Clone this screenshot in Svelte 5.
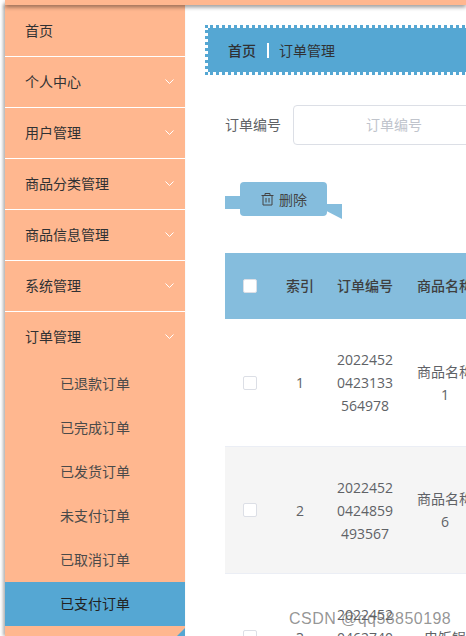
<script>
  const menus = ['个人中心', '用户管理', '商品分类管理', '商品信息管理', '系统管理'];
  const subs = ['已退款订单', '已完成订单', '已发货订单', '未支付订单', '已取消订单', '已支付订单'];
  const rows = [
    { idx: 1, no: '20224520423133564978', name: '商品名称1' },
    { idx: 2, no: '20224520424859493567', name: '商品名称6' },
    { idx: 3, no: '20224520462740182936', name: '电饭锅' }
  ];
</script>

<div class="page">
  <div class="topbar"></div>
  <div class="body">
    <aside class="sidebar">
      <div class="item">首页</div>
      {#each menus as m}
        <div class="item">
          {m}
          <svg class="arrow" width="9" height="5" viewBox="0 0 9 5" fill="none" stroke="currentColor" stroke-width="1"><polyline points="0.5 0.5 4.5 4.5 8.5 0.5"></polyline></svg>
        </div>
      {/each}
      <div class="item open">
        订单管理
        <svg class="arrow" width="9" height="5" viewBox="0 0 9 5" fill="none" stroke="currentColor" stroke-width="1"><polyline points="0.5 0.5 4.5 4.5 8.5 0.5"></polyline></svg>
      </div>
      {#each subs as s, i}
        <div class="sub" class:active={i === subs.length - 1}>{s}</div>
      {/each}
      <div class="corner"></div>
    </aside>

    <main class="main">
      <div class="crumb">
        <b>首页</b>
        <span class="sep"></span>
        <span>订单管理</span>
      </div>

      <div class="search">
        <label for="no">订单编号</label>
        <input id="no" placeholder="订单编号" />
      </div>

      <div class="actions">
        <button class="del">
          <svg width="13" height="14" viewBox="0 0 13 14" fill="none" stroke="currentColor" stroke-width="1">
            <path d="M0.5 3.5h12M4 3.5V1.5h5v2M2 3.5v9.5h9V3.5M5 6v4.5M8 6v4.5"></path>
          </svg>
          删除
        </button>
      </div>

      <table>
        <colgroup>
          <col style="width: 50px" />
          <col style="width: 50px" />
          <col style="width: 80px" />
          <col style="width: 80px" />
        </colgroup>
        <thead>
          <tr>
            <th><span class="check"></span></th>
            <th>索引</th>
            <th>订单编号</th>
            <th>商品名称</th>
          </tr>
        </thead>
        <tbody>
          {#each rows as r, i}
            <tr class:stripe={i % 2 === 1}>
              <td><span class="check"></span></td>
              <td>{r.idx}</td>
              <td class="no">{r.no}</td>
              <td>{r.name}</td>
            </tr>
          {/each}
        </tbody>
      </table>
    </main>
  </div>
  <div class="watermark">CSDN @qq58850198</div>
</div>

<style>
  :global(body) {
    margin: 0;
    background: #fff;
    font-family: "Noto Sans CJK SC", sans-serif;
  }

  .page {
    position: relative;
    width: 466px;
    height: 636px;
    overflow: hidden;
    display: flex;
    flex-direction: column;
    background: #fff;
  }

  .topbar {
    flex: none;
    height: 5px;
    margin-left: 5px;
    background: #ffb78f;
    box-shadow: 0 2px 4px rgba(0, 0, 0, 0.45);
    position: relative;
    z-index: 2;
  }

  .body {
    flex: 1;
    display: flex;
    min-height: 0;
  }

  .sidebar {
    position: relative;
    flex: none;
    width: 180px;
    margin-left: 5px;
    padding-top: 1px;
    background: #ffb78f;
    box-shadow: -2px 0 3px rgba(0, 0, 0, 0.3);
    color: #333;
    font-size: 14px;
  }

  .item {
    position: relative;
    height: 50px;
    line-height: 48px;
    padding-left: 20px;
    border-bottom: 1px solid #fff;
    color: #303133;
  }

  .item.open {
    border-bottom: none;
  }

  .arrow {
    position: absolute;
    right: 11px;
    top: 22px;
    color: #fff;
  }

  .sub {
    height: 44px;
    line-height: 42px;
    padding-left: 55px;
    color: #4a4a4a;
  }

  .sub.active {
    background: #55a7d3;
    color: #222;
  }

  .corner {
    position: absolute;
    right: 0;
    bottom: 0;
    width: 0;
    height: 0;
    border-left: 8px solid transparent;
    border-bottom: 8px solid #55a7d3;
  }

  .main {
    flex: 1;
    min-width: 0;
    padding: 20px 0 0 20px;
    color: #606266;
    font-size: 14px;
  }

  .crumb {
    display: flex;
    align-items: center;
    width: 300px;
    height: 44px;
    padding-left: 20px;
    background: #55a7d3 padding-box;
    border: 3px dotted #55a7d3;
    color: #303133;
  }

  .crumb b {
    font-weight: 500;
  }

  .sep {
    width: 2px;
    height: 15px;
    margin: 0 10px 0 11px;
    background: #fff;
  }

  .search {
    display: flex;
    align-items: center;
    margin-top: 30px;
    margin-left: 20px;
    width: 300px;
  }

  .search label {
    flex: none;
    width: 68px;
    padding-bottom: 2px;
    white-space: nowrap;
  }

  .search input {
    flex: none;
    box-sizing: border-box;
    width: 230px;
    height: 40px;
    padding: 0 28px 2px 0;
    text-align: center;
    border: 1px solid #dcdfe6;
    border-radius: 4px;
    font: inherit;
    outline: none;
  }

  .search input::placeholder {
    color: #c0c4cc;
  }

  .actions {
    margin-top: 37px;
    margin-left: 35px;
  }

  .del {
    position: relative;
    display: flex;
    align-items: center;
    gap: 5px;
    width: 87px;
    height: 34px;
    padding: 0 0 0 21px;
    border: none;
    border-radius: 4px;
    background: #85bddd;
    color: #444;
    font: inherit;
    font-size: 14px;
  }

  .del::before {
    content: "";
    position: absolute;
    left: -15px;
    top: 14px;
    width: 15px;
    height: 13px;
    background: #85bddd;
  }

  .del::after {
    content: "";
    position: absolute;
    left: 87px;
    top: 22px;
    width: 15px;
    height: 15px;
    background: #85bddd;
    clip-path: polygon(0 0, 100% 0, 100% 100%, 0 48%);
  }

  table {
    width: 260px;
    margin: 37px 0 0 20px;
    border-collapse: separate;
    border-spacing: 0;
    table-layout: fixed;
    font-size: 14px;
  }

  th {
    height: 66px;
    padding: 0 12px 2px;
    box-sizing: border-box;
    background: #85bddd;
    color: #3f3f3f;
    font-weight: 500;
    text-align: center;
    white-space: nowrap;
  }

  th:first-child {
    padding: 0 12px;
  }

  th:nth-child(2) {
    padding: 0 0 2px;
  }

  td {
    box-sizing: border-box;
    height: 127px;
    padding: 0 12px;
    border-bottom: 1px solid #ebeef5;
    text-align: center;
    color: #606266;
    line-height: 23px;
    font-family: "Open Sans", "Noto Sans CJK SC", sans-serif;
  }

  tbody tr:first-child td {
    height: 128px;
  }

  tr.stripe td {
    background: #f5f5f5;
  }

  td.no {
    padding: 0 10px;
    word-break: break-all;
  }

  .check {
    display: block;
    box-sizing: border-box;
    width: 14px;
    height: 14px;
    margin-left: 6px;
    border: 1px solid #dcdfe6;
    border-radius: 2px;
    background: #fff;
  }

  .watermark {
    position: absolute;
    left: 289px;
    top: 610px;
    font-family: "Liberation Sans", sans-serif;
    font-size: 16px;
    color: rgba(90, 90, 90, 0.65);
    letter-spacing: 0.45px;
    white-space: nowrap;
  }
</style>
